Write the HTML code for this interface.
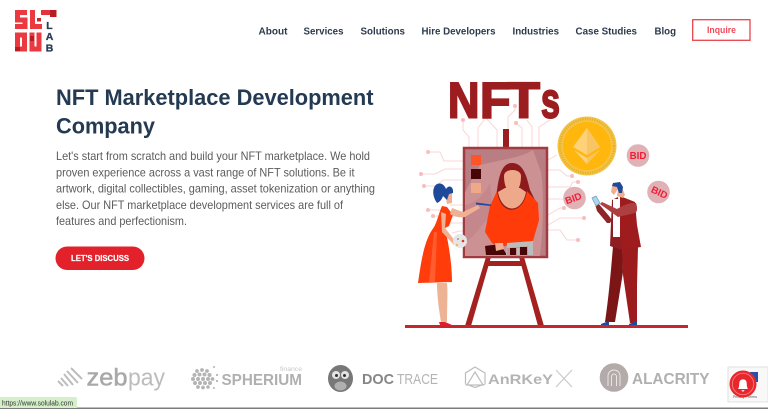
<!DOCTYPE html>
<html><head><meta charset="utf-8"><style>
html,body{margin:0;padding:0;width:768px;height:409px;overflow:hidden;background:#fff}
svg{display:block;filter:blur(.35px)}
text{font-family:"Liberation Sans",sans-serif}
</style></head><body>
<svg width="768" height="409" viewBox="0 0 768 409" xmlns="http://www.w3.org/2000/svg">
<rect width="768" height="409" fill="#fff"/>

<!-- logo -->
<g fill="none" stroke="#ea3a40" stroke-width="5">
<path d="M27 12.500H17.500V20H25V26.500H15"/>
<path d="M32.500 10V26.500H42"/>
<rect x="17.500" y="35" width="7" height="14"/>
<path d="M32 32.500V49H39V32.500"/>
</g>
<path d="M41 10H56.500V17H50V15H41Z" fill="#e3343b"/>
<rect x="50" y="10" width="6.500" height="7" fill="#b81c22"/>
<rect x="37" y="18" width="4" height="3.500" fill="#c9252b"/>
<rect x="30" y="36" width="4" height="5" fill="#b81c22"/>
<rect x="15" y="47" width="5" height="4" fill="#b81c22"/>
<g font-weight="700" font-size="10.500" fill="#2a3d55" stroke="#2a3d55" stroke-width=".3" text-anchor="middle">
<text x="49.500" y="29">L</text><text x="49.500" y="40">A</text><text x="49.500" y="51.500">B</text>
</g>

<!-- nav -->
<g font-weight="700" font-size="10.500" fill="#2b3a4c">
<text x="258.500" y="34.500" textLength="29" lengthAdjust="spacingAndGlyphs">About</text>
<text x="303.500" y="34.500" textLength="40" lengthAdjust="spacingAndGlyphs">Services</text>
<text x="360.500" y="34.500" textLength="44.500" lengthAdjust="spacingAndGlyphs">Solutions</text>
<text x="421.500" y="34.500" textLength="74" lengthAdjust="spacingAndGlyphs">Hire Developers</text>
<text x="512.500" y="34.500" textLength="46.500" lengthAdjust="spacingAndGlyphs">Industries</text>
<text x="575.500" y="34.500" textLength="61.500" lengthAdjust="spacingAndGlyphs">Case Studies</text>
<text x="654.500" y="34.500" textLength="21.500" lengthAdjust="spacingAndGlyphs">Blog</text>
</g>
<rect x="692.700" y="19.700" width="57.300" height="20.600" fill="#fff" stroke="#e8434a" stroke-width="1.300"/>
<text x="707" y="33" font-weight="700" font-size="9.500" fill="#ee4a5a" textLength="29" lengthAdjust="spacingAndGlyphs">Inquire</text>

<!-- hero text -->
<g font-weight="700" font-size="22.500" fill="#233a52">
<text x="56" y="105" textLength="317.500" lengthAdjust="spacingAndGlyphs">NFT Marketplace Development</text>
<text x="56" y="133.500" textLength="99" lengthAdjust="spacingAndGlyphs">Company</text>
</g>
<g font-size="12" fill="#5b5b5b">
<text x="56" y="160" textLength="314" lengthAdjust="spacingAndGlyphs">Let's start from scratch and build your NFT marketplace. We hold</text>
<text x="56" y="176.300" textLength="298.500" lengthAdjust="spacingAndGlyphs">proven experience across a vast range of NFT solutions. Be it</text>
<text x="56" y="192.600" textLength="319" lengthAdjust="spacingAndGlyphs">artwork, digital collectibles, gaming, asset tokenization or anything</text>
<text x="56" y="208.900" textLength="287" lengthAdjust="spacingAndGlyphs">else. Our NFT marketplace development services are full of</text>
<text x="56" y="225.200" textLength="131" lengthAdjust="spacingAndGlyphs">features and perfectionism.</text>
</g>
<rect x="55.500" y="246.500" width="89" height="23.500" rx="11.700" fill="#e3212b"/>
<text x="71" y="261" font-weight="700" font-size="7.800" fill="#fff" stroke="#fff" stroke-width=".2" textLength="58" lengthAdjust="spacingAndGlyphs">LET'S DISCUSS</text>

<!-- circuit lines -->
<g fill="none" stroke="#fbd5d5" stroke-width="1">
<path d="M428 152H440L444 161H463"/>
<path d="M421 174H435L445 169H463"/>
<path d="M424 186H436L443 180H463"/>
<path d="M428 210H440"/>
<path d="M450 205H463"/>
<path d="M433 216H463"/>
<path d="M450 223H463"/>
<path d="M452 233L460 231H463"/>
<path d="M463 120V130L469 137V147"/>
<path d="M484 116V120L478 128V147"/>
<path d="M486 118L497 130V147"/>
<path d="M515 106V110L508 117V130"/>
<path d="M516 123L522 128V147"/>
<path d="M527 120L532 127V147"/>
<path d="M550 120L539 127V147"/>
<path d="M548 160L557 155"/>
<path d="M548 170H560L567 176H572"/>
<path d="M548 187H570L573 182H578"/>
<path d="M548 199H563"/>
<path d="M548 215L560 208H564"/>
<path d="M548 225L560 218H584"/>
<path d="M548 230H560L567 240H578"/>
</g>
<g fill="#f9bdbd">
<circle cx="428" cy="152" r="2"/><circle cx="421" cy="174" r="2"/><circle cx="424" cy="186" r="2"/><circle cx="428" cy="210" r="2"/><circle cx="433" cy="216" r="2"/>
<circle cx="463" cy="120" r="2"/><circle cx="484" cy="116" r="2"/><circle cx="515" cy="106" r="2"/><circle cx="516" cy="123" r="2"/>
<circle cx="572" cy="176" r="2"/><circle cx="578" cy="182" r="2"/><circle cx="564" cy="208" r="2"/><circle cx="584" cy="218" r="2"/><circle cx="578" cy="240" r="2"/>
</g>

<!-- NFTs -->
<g font-weight="700" font-size="50" fill="#9c1d20" stroke="#9c1d20" stroke-width="2">
<text transform="translate(448 117.500) scale(.87 1)">N</text>
<text transform="translate(480 117.500)">F</text>
<text transform="translate(507.500 117.500) scale(1.06 1)">T</text>
<text transform="translate(541 117.500) scale(.68 1)">s</text>
</g>
<rect x="503" y="129" width="6" height="19" fill="#9c1d20"/>

<!-- coin -->
<circle cx="587" cy="146" r="29.500" fill="#f4c445"/>
<circle cx="587" cy="146" r="27" fill="none" stroke="#e6ad2a" stroke-width="2.500" stroke-dasharray="1.200 1.200"/>
<circle cx="587" cy="146" r="24" fill="#ffb60d"/>
<path d="M587 128L600 147L587 155L573 147Z" fill="#ffd27a"/>
<path d="M587 128V155L600 147Z" fill="#f9c464"/>
<path d="M574 150L587 158L600 150L587 164Z" fill="#ffd27a"/>
<path d="M587 158L600 150L587 164Z" fill="#f9c464"/>

<!-- BID badges -->
<g fill="#e0b2b6"><circle cx="638" cy="155.500" r="11.300"/><circle cx="658.500" cy="192" r="11.300"/><circle cx="574.500" cy="198" r="11.300"/></g>
<g font-weight="700" font-size="9.800" fill="#f01f35" text-anchor="middle">
<text x="638" y="159">BID</text>
<text transform="translate(658 195.500) rotate(25)">BID</text>
<text transform="translate(574.500 201.500) rotate(-20)">BID</text>
</g>

<!-- easel -->
<g fill="#a3211f">
<path d="M486 257H491L471 326H465Z"/>
<path d="M519 257H524L544 326H538Z"/>
<rect x="488" y="261" width="35" height="5"/>
</g>
<!-- painting -->
<rect x="464" y="148" width="83" height="109" fill="#b87e83" stroke="#a33a40" stroke-width="2.500"/>
<path d="M465 192L480 165C500 160 520 158 533 150L541 172C545 200 542 240 540 256H465Z" fill="#cb9193"/>
<path d="M465 205C476 203 484 195 490 183L493 215C483 220 478 235 465 242Z" fill="#c08387" opacity=".7"/>
<rect x="471" y="155" width="10" height="10" fill="#ff5427"/>
<rect x="471" y="169" width="10" height="10" fill="#470505"/>
<rect x="471" y="183" width="10" height="10" fill="#efa888"/>
<!-- portrait -->
<path d="M496 200C498 178 501 163 512 163C524 163 527 178 530 190L537 204L525 210H500Z" fill="#8d1a1c"/>
<path d="M504 176C504 168 521 168 521 176C521 188 516 194 512 194C508 194 504 186 504 176Z" fill="#eea98a"/>
<path d="M505 188L520 188L526 192C522 214 502 214 498 192Z" fill="#eea98a"/>
<path d="M497 191C500 216 523 216 527 191L538 203L539 220L533 241L500 247L492 243L485 232L490 206Z" fill="#ff3b0a"/>
<path d="M485 246L500 244L507 255H486Z" fill="#480606"/>
<path d="M507 243L533 241V255H530V246L507 248V255H506Z" fill="#bcbcbc"/>
<rect x="510" y="248" width="6" height="7" fill="#480606"/>
<rect x="520" y="247" width="7" height="8" fill="#480606"/>
<rect x="517" y="248" width="2.500" height="7" fill="#bcbcbc"/>
<rect x="528" y="246" width="3.500" height="9" fill="#bcbcbc"/>
<path d="M495 243L503 243L504 249L496 251Z" fill="#efae92"/>

<!-- woman -->
<path d="M447 322C447 305 448 292 447 283H437C437 296 439 310 441 322Z" fill="#eeb294"/>
<path d="M439 322H445L452 325H440Z" fill="#e31b2a"/>
<path d="M442 206L447 207L453 215L449 226L445 228C449 245 452 265 452 282L418 283C421 262 424 242 432 230C437 224 439 212 442 206Z" fill="#ff3c0a"/>
<path d="M434 232L429 282H435L437 232Z" fill="#ff5c30"/>
<path d="M452 208L463 212L478 205L480 208L465 217C458 218 453 216 450 214Z" fill="#efb093"/>
<path d="M441 212L446 214L445 228L456 242L454 245L442 232Z" fill="#efb093"/>
<path d="M476 202.500L491 204.500L491 206L476 204.500Z" fill="#23479c"/>
<circle cx="460" cy="241" r="7" fill="#e6e6e6"/>
<circle cx="463" cy="241" r="1.300" fill="#d33"/><circle cx="458" cy="239" r="1" fill="#999"/><circle cx="457" cy="245" r="1.200" fill="#e3c14f"/>
<path d="M452 203L447 204L446 198L449 191H452Z" fill="#efb093"/>
<path d="M437 203C432 196 432 187 437 184C442 182 445 186 446 189C449 184 454 187 453 193L449 194L447 200L443 196C442 199 440 202 437 203Z" fill="#1f4a9c"/>

<!-- man -->
<path d="M613 246L622 238L623 272L615 322L605 322C609 295 611 270 613 246Z" fill="#7c1616"/>
<path d="M622 248L638 247L637 285L637 323H630L623 275Z" fill="#9c1c1e"/>
<path d="M601 324L609 321L609 325H601Z" fill="#1f4a9c"/>
<path d="M629 324L637 321L637 325H629Z" fill="#1f4a9c"/>
<path d="M610 246L612 200L618 197L622 250Z" fill="#8e1e22"/>
<path d="M613 199H620V237H613Z" fill="#fff"/>
<path d="M620 196L635 202L637 225L641 247L622 250L620 238Z" fill="#9e1c1e"/>
<path d="M636 203C638 209 637 212 635 213L618 217L600 204L602 202L617 209C622 206 630 202 636 203Z" fill="#ad3f41"/>
<path d="M595 204L598 203L609 216L612 220L610 223L607 223L597 211Z" fill="#8e2528"/>
<path d="M592 198L596 196L600 203L596 206Z" fill="#a8d6ec" stroke="#6f9bc4" stroke-width=".7"/>
<path d="M618 189L617 196L623 198L625 195L621 185L612 186L611 192L614 195Z" fill="#eeae90"/>
<path d="M613 183L620 182L623 187L622 193L619 193L617 187L612 186Z" fill="#1f4a9c"/>

<!-- ground -->
<rect x="405" y="325" width="283" height="3" fill="#c4282e"/>

<!-- client logos -->
<g fill="none" stroke="#bdbdbd" stroke-width="2">
<path d="M58 381L63 386M61 378L68 386M64 374L73 385M67 371L78 383M71 368L82 379"/>
</g>
<text x="86.500" y="385.500" font-size="24.500" fill="#a8a8a8" stroke="#a8a8a8" stroke-width=".5" textLength="41" lengthAdjust="spacingAndGlyphs">zeb</text>
<text x="128" y="385.500" font-size="24.500" fill="#bcbcbc" textLength="37" lengthAdjust="spacingAndGlyphs">pay</text>

<g fill="#b4b4b4">
<circle cx="197" cy="371" r="1.900"/><circle cx="202" cy="370" r="1.900"/><circle cx="207" cy="371" r="1.900"/>
<circle cx="194.500" cy="375" r="2"/><circle cx="199.500" cy="374.500" r="2"/><circle cx="204.500" cy="374.500" r="2"/><circle cx="209.500" cy="375" r="2"/>
<circle cx="193" cy="379" r="2"/><circle cx="198" cy="379" r="2"/><circle cx="203" cy="379" r="2"/><circle cx="208" cy="379" r="2"/><circle cx="212.500" cy="379" r="1.900"/>
<circle cx="195" cy="383" r="2"/><circle cx="200" cy="383" r="2"/><circle cx="205" cy="383" r="2"/><circle cx="210" cy="383" r="2"/>
<circle cx="198" cy="387" r="1.900"/><circle cx="203" cy="387.500" r="1.900"/><circle cx="208" cy="387" r="1.800"/>
<circle cx="214" cy="367" r="1"/><circle cx="217" cy="375" r="1.100"/><circle cx="217" cy="381" r="1.100"/><circle cx="214" cy="388" r="1"/>
</g>
<text x="221.500" y="385" font-size="15.500" font-weight="700" fill="#b0b0b0" textLength="80.500" lengthAdjust="spacingAndGlyphs">SPHERIUM</text>
<text x="280" y="371" font-size="6.500" fill="#c8c8c8" textLength="22" lengthAdjust="spacingAndGlyphs">finance</text>

<ellipse cx="340.500" cy="378.500" rx="12.500" ry="13.500" fill="#787878"/>
<circle cx="336" cy="375" r="4" fill="#e4e4e4"/><circle cx="345" cy="375" r="4" fill="#e4e4e4"/>
<circle cx="336.500" cy="375.500" r="1.500" fill="#333"/><circle cx="344.500" cy="375.500" r="1.500" fill="#333"/>
<ellipse cx="340.500" cy="386" rx="6" ry="4.500" fill="#b0b0b0"/>
<text x="362" y="384" font-size="15" font-weight="700" fill="#858585" textLength="32" lengthAdjust="spacingAndGlyphs">DOC</text>
<text x="397" y="384" font-size="15" fill="#b4b4b4" textLength="41" lengthAdjust="spacingAndGlyphs">TRACE</text>

<path d="M475 367L485 373V384L475 387.500L465.500 384V373ZM475 372L483 385H467Z" fill="none" stroke="#bdbdbd" stroke-width="1.200"/>
<text x="488" y="384" font-size="14" font-weight="700" fill="#b4b4b4" textLength="65" lengthAdjust="spacingAndGlyphs">AnRKeY</text>
<path d="M556 370L572 387M572 370L556 387" stroke="#cacaca" stroke-width="1.200" fill="none"/>

<circle cx="614" cy="377.500" r="14.300" fill="#b3aaa9"/>
<path d="M608 386V376C608 368 620 368 620 376V386M611.500 386V377C611.500 373 616.500 373 616.500 377V386" fill="none" stroke="#e9e6e6" stroke-width="1"/>
<text x="632" y="384" font-size="16" font-weight="700" fill="#b0b0b0" textLength="77.500" lengthAdjust="spacingAndGlyphs">ALACRITY</text>

<!-- recaptcha -->
<rect x="728" y="367" width="40" height="35" fill="#f8f8f8" stroke="#e2e2e2" stroke-width="1"/>
<path d="M750 372H758V382H750Z" fill="#2a4fa8"/>
<text x="733" y="398" font-size="3.500" fill="#555">Privacy · Terms</text>
<circle cx="743" cy="384" r="13.500" fill="#e8262c"/>
<circle cx="743" cy="384" r="10.700" fill="none" stroke="#f47a7d" stroke-width="1"/>
<path d="M738 389C739.500 387 739 384 739.500 382C740 378.500 746 378.500 746.500 382C747 384 746.500 387 748 389Z" fill="#fff"/>
<path d="M741.500 390.200H744.500C744 392 742 392 741.500 390.200Z" fill="#fff"/>

<!-- bottom bar + status -->
<rect x="0" y="407.500" width="768" height="1.500" fill="#7b7b7b"/>
<path d="M0 397H75Q77 397 77 399V408H0Z" fill="#d4efc9"/>
<text x="2" y="405.500" font-size="7.300" fill="#333" textLength="71" lengthAdjust="spacingAndGlyphs">https://www.solulab.com</text>
</svg>
</body></html>
